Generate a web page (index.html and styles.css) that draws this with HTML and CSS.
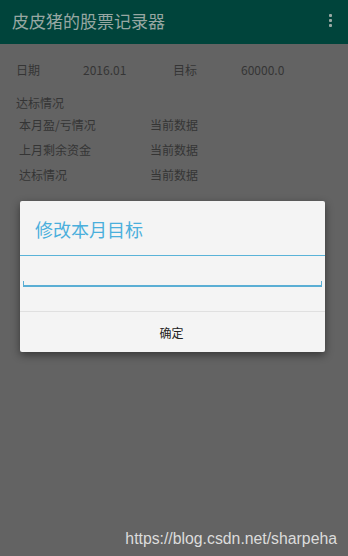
FILE: index.html
```html
<!DOCTYPE html>
<html lang="zh">
<head>
    <meta charset="UTF-8">
    <meta name="viewport" content="width=device-width, initial-scale=1.0">
    <title>皮皮猪的股票记录器</title>
    <link rel="stylesheet" href="styles.css">
</head>
<body>
    <div class="screen">
        <header class="toolbar">
            <span class="app-title">皮皮猪的股票记录器</span>
            <span class="overflow"><i></i><i></i><i></i></span>
        </header>

        <div class="content">
            <div class="info-row">
                <span class="label">日期</span>
                <span class="value">2016.01</span>
                <span class="label">目标</span>
                <span class="value">60000.0</span>
            </div>

            <div class="section-title">达标情况</div>
            <div class="stat-row">
                <span class="stat-name">本月盈/亏情况</span>
                <span class="stat-value">当前数据</span>
            </div>
            <div class="stat-row">
                <span class="stat-name">上月剩余资金</span>
                <span class="stat-value">当前数据</span>
            </div>
            <div class="stat-row">
                <span class="stat-name">达标情况</span>
                <span class="stat-value">当前数据</span>
            </div>
        </div>

        <!-- dialog over the dimmed page -->
        <div class="dialog">
            <div class="dialog-title">修改本月目标</div>
            <div class="dialog-body">
                <div class="edit-field"></div>
            </div>
            <div class="dialog-actions">
                <button class="ok-btn">确定</button>
            </div>
        </div>

        <div class="watermark">https://blog.csdn.net/sharpeha</div>
    </div>
</body>
</html>
```

FILE: styles.css
```css
html, body {
    margin: 0;
    padding: 0;
}

body {
    font-family: "Noto Sans CJK SC", "Noto Sans", sans-serif;
    background: #636363;
}

.screen {
    position: relative;
    width: 348px;
    height: 556px;
    overflow: hidden;
    background: #636363;
}

/* Toolbar */
.toolbar {
    height: 44px;
    background: #00443b;
    display: flex;
    align-items: center;
    justify-content: space-between;
    padding: 0 12px 0 12px;
    box-sizing: border-box;
}

.app-title {
    color: #97a7a2;
    font-size: 17px;
    line-height: 1;
    margin-top: -4px;
}

.overflow {
    display: flex;
    flex-direction: column;
    gap: 2px;
    margin-right: 4px;
    margin-top: -4px;
}

.overflow i {
    display: block;
    width: 3px;
    height: 3px;
    background: #9aa8a4;
    border-radius: 1px;
}

/* Page content */
.content {
    padding: 19px 0 0 16px;
    color: #353535;
    font-size: 12px;
}

.info-row {
    display: flex;
    height: 14px;
    line-height: 14px;
}

.info-row span:nth-child(1) { width: 67px; }
.info-row span:nth-child(2) { width: 90px; }
.info-row span:nth-child(3) { width: 68px; }

.section-title {
    margin-top: 19px;
    height: 14px;
    line-height: 14px;
}

.stat-row {
    display: flex;
    padding-left: 3px;
    height: 25px;
    line-height: 14px;
    padding-top: 8px;
    box-sizing: border-box;
}

.stat-name {
    width: 131px;
}

/* Dialog */
.dialog {
    position: absolute;
    top: 201px;
    left: 20px;
    width: 305px;
    height: 151px;
    background: #f4f4f4;
    border-radius: 2px;
    box-shadow: 0 3px 8px rgba(0, 0, 0, 0.45);
}

.dialog-title {
    height: 55px;
    padding-left: 15px;
    color: #4aafdc;
    font-size: 18px;
    line-height: 56px;
    border-bottom: 1px solid #5ab3d8;
    box-sizing: border-box;
}

.dialog-body {
    height: 56px;
    padding: 0 3px;
    border-bottom: 1px solid #e0e0e0;
    box-sizing: border-box;
}

.edit-field {
    height: 29px;
    border-bottom: 2px solid #5aaed4;
    position: relative;
}

.edit-field::before,
.edit-field::after {
    content: "";
    position: absolute;
    bottom: 0;
    width: 1px;
    height: 4px;
    background: #5aaed4;
}

.edit-field::before { left: 0; }
.edit-field::after { right: 0; }

.dialog-actions {
    height: 40px;
    display: flex;
    align-items: center;
    justify-content: center;
}

.ok-btn {
    background: none;
    border: none;
    font-family: "Noto Sans CJK SC", sans-serif;
    font-size: 12px;
    color: #222;
    padding: 0;
    margin-left: -2px;
    margin-top: 1px;
}

/* Watermark */
.watermark {
    position: absolute;
    right: 11px;
    bottom: 8px;
    color: #dcdcdc;
    font-family: "Liberation Sans", Arial, sans-serif;
    font-size: 15.8px;
}
```
